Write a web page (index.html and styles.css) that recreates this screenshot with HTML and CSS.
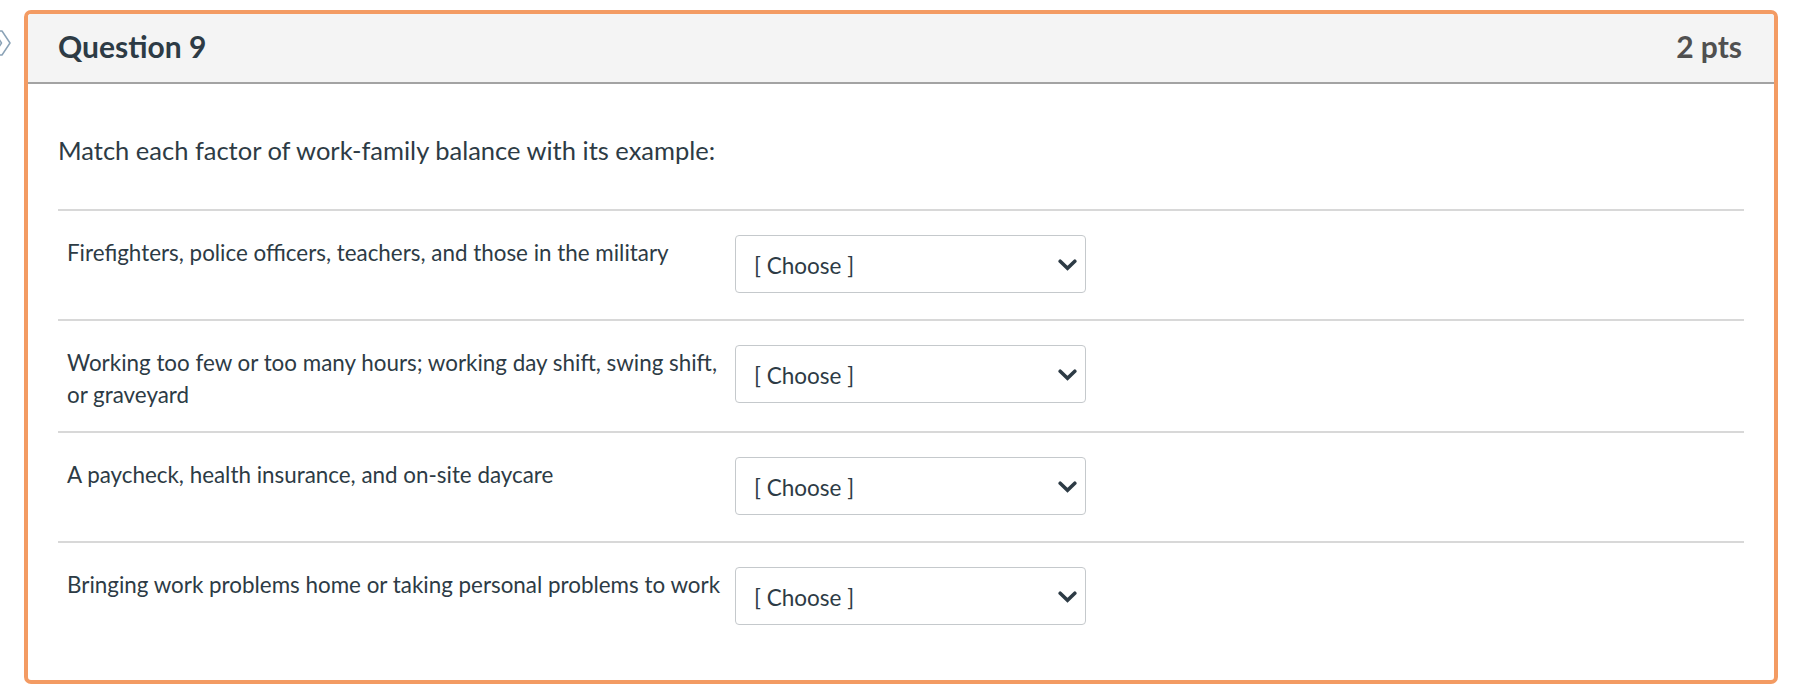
FILE: index.html
```html
<!DOCTYPE html>
<html lang="en">
<head>
<meta charset="utf-8">
<title>Question 9</title>
<link rel="stylesheet" href="styles.css">
</head>
<body>
<div class="page">
  <div class="rail">
    <svg class="flag" width="24" height="26" viewBox="0 0 24 26" aria-hidden="true">
      <polygon points="-6,1 2,1 10,13 2,25 -6,25 1.5,13" fill="#ffffff" stroke="#8aa2b6" stroke-width="1.5" stroke-linejoin="round"/>
    </svg>
  </div>
  <div class="card">
    <div class="card-header">
      <h2 class="q-name">Question 9</h2>
      <span class="q-points">2 pts</span>
    </div>
    <div class="card-body">
      <p class="q-text">Match each factor of work-family balance with its example:</p>
      <div class="match-list">
        <div class="match-row">
          <div class="match-label">Firefighters, police officers, teachers, and those in the military</div>
          <div class="select-wrap">
            <select class="choose"><option>[ Choose ]</option></select>
            <svg class="caret" width="19" height="12" viewBox="0 0 19 12" aria-hidden="true"><polyline points="2.2,2.2 9.5,9.2 16.8,2.2" fill="none" stroke="#2d3b45" stroke-width="3.6" stroke-linecap="round" stroke-linejoin="miter"/></svg>
          </div>
        </div>
        <div class="match-row">
          <div class="match-label">Working too few or too many hours; working day shift, swing shift, or graveyard</div>
          <div class="select-wrap">
            <select class="choose"><option>[ Choose ]</option></select>
            <svg class="caret" width="19" height="12" viewBox="0 0 19 12" aria-hidden="true"><polyline points="2.2,2.2 9.5,9.2 16.8,2.2" fill="none" stroke="#2d3b45" stroke-width="3.6" stroke-linecap="round" stroke-linejoin="miter"/></svg>
          </div>
        </div>
        <div class="match-row">
          <div class="match-label">A paycheck, health insurance, and on-site daycare</div>
          <div class="select-wrap">
            <select class="choose"><option>[ Choose ]</option></select>
            <svg class="caret" width="19" height="12" viewBox="0 0 19 12" aria-hidden="true"><polyline points="2.2,2.2 9.5,9.2 16.8,2.2" fill="none" stroke="#2d3b45" stroke-width="3.6" stroke-linecap="round" stroke-linejoin="miter"/></svg>
          </div>
        </div>
        <div class="match-row">
          <div class="match-label">Bringing work problems home or taking personal problems to work</div>
          <div class="select-wrap">
            <select class="choose"><option>[ Choose ]</option></select>
            <svg class="caret" width="19" height="12" viewBox="0 0 19 12" aria-hidden="true"><polyline points="2.2,2.2 9.5,9.2 16.8,2.2" fill="none" stroke="#2d3b45" stroke-width="3.6" stroke-linecap="round" stroke-linejoin="miter"/></svg>
          </div>
        </div>
      </div>
    </div>
  </div>
</div>
</body>
</html>
```

FILE: styles.css
```css
html, body {
  margin: 0;
  padding: 0;
  background: #ffffff;
}

body {
  font-family: Lato, "Open Sans", "Liberation Sans", sans-serif;
  color: #2d3b45;
}

.page {
  display: flex;
  padding: 10px 28px 0 0;
}

.rail {
  width: 24px;
  flex: 0 0 24px;
  padding-top: 20px;
}

.flag {
  display: block;
}

.card {
  flex: 1;
  border: 4px solid #f39b63;
  border-radius: 7px;
  overflow: hidden;
  background: #ffffff;
}

.card-header {
  display: flex;
  align-items: center;
  justify-content: space-between;
  height: 64px;
  padding: 0 32px 4px 30px;
  background: #f4f4f4;
  border-bottom: 2px solid #a3a3a3;
}

.q-name {
  margin: 0;
  font-size: 30px;
  line-height: 36px;
  font-weight: 700;
  color: #2d3b45;
}

.q-points {
  font-size: 30px;
  line-height: 36px;
  font-weight: 700;
  color: #505050;
}

.card-body {
  padding: 48px 30px 29px 30px;
}

.q-text {
  margin: 0 0 41px 0;
  font-size: 25.5px;
  line-height: 36px;
}

.match-row {
  display: grid;
  grid-template-columns: 677px 351px;
  align-items: start;
  border-top: 2px solid #d8d8d8;
}

.match-label {
  padding: 25.5px 0 19.5px 9px;
  font-size: 22.4px;
  line-height: 32.5px;
  color: #2d3b45;
}

.select-wrap {
  position: relative;
  height: 58px;
  margin: 24px 0 26px 0;
}

.choose {
  appearance: none;
  -webkit-appearance: none;
  display: block;
  width: 351px;
  height: 58px;
  margin: 0;
  padding: 2px 40px 0 18px;
  box-sizing: border-box;
  border: 1.5px solid #c5c9cc;
  border-radius: 4px;
  background: #ffffff;
  font-family: Lato, "Open Sans", "Liberation Sans", sans-serif;
  font-size: 22.5px;
  color: #2d3b45;
}

.caret {
  position: absolute;
  right: 9px;
  top: 24px;
  pointer-events: none;
}
```
